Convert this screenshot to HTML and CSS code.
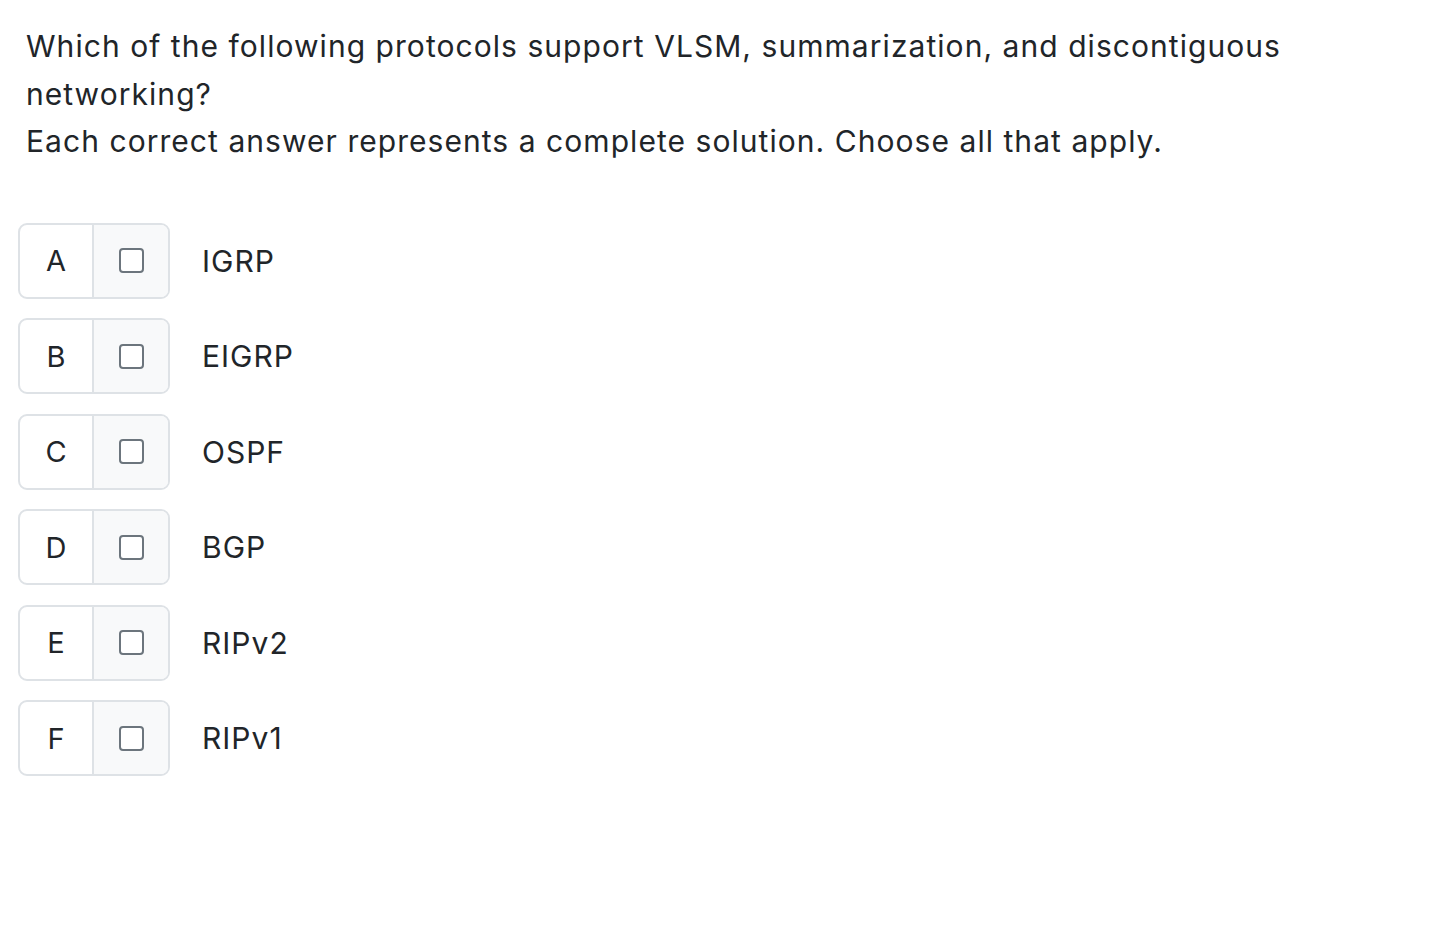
FILE: index.html
```html
<!DOCTYPE html>
<html lang="en">
<head>
    <meta charset="UTF-8">
    <meta name="viewport" content="width=device-width, initial-scale=1.0">
    <title>Question</title>
    <link rel="stylesheet" href="styles.css">
</head>
<body>
    <div class="question">
        <p class="question-text">Which of the following protocols support VLSM, summarization, and discontiguous networking?</p>
        <p class="question-hint">Each correct answer represents a complete solution. Choose all that apply.</p>
    </div>

    <div class="options">
        <label class="option">
            <span class="option-box">
                <span class="option-letter">A</span>
                <span class="option-check"><input type="checkbox"></span>
            </span>
            <span class="option-label">IGRP</span>
        </label>
        <label class="option">
            <span class="option-box">
                <span class="option-letter">B</span>
                <span class="option-check"><input type="checkbox"></span>
            </span>
            <span class="option-label">EIGRP</span>
        </label>
        <label class="option">
            <span class="option-box">
                <span class="option-letter">C</span>
                <span class="option-check"><input type="checkbox"></span>
            </span>
            <span class="option-label">OSPF</span>
        </label>
        <label class="option">
            <span class="option-box">
                <span class="option-letter">D</span>
                <span class="option-check"><input type="checkbox"></span>
            </span>
            <span class="option-label">BGP</span>
        </label>
        <label class="option">
            <span class="option-box">
                <span class="option-letter">E</span>
                <span class="option-check"><input type="checkbox"></span>
            </span>
            <span class="option-label">RIPv2</span>
        </label>
        <label class="option">
            <span class="option-box">
                <span class="option-letter">F</span>
                <span class="option-check"><input type="checkbox"></span>
            </span>
            <span class="option-label">RIPv1</span>
        </label>
    </div>
</body>
</html>
```

FILE: styles.css
```css
* {
    margin: 0;
    padding: 0;
    box-sizing: border-box;
}

body {
    font-family: 'Inter', 'Liberation Sans', sans-serif;
    color: #212529;
    background: #fff;
    padding: 23px 18px;
}

.question {
    padding-left: 8px;
    font-size: 30px;
    line-height: 47.5px;
    letter-spacing: 1.05px;
    max-width: 1300px;
}

.options {
    display: flex;
    flex-direction: column;
    gap: 19.5px;
    margin-top: 57px;
}

.option {
    display: flex;
    align-items: center;
    cursor: pointer;
}

.option-box {
    display: flex;
    width: 152px;
    height: 76px;
    border: 2px solid #dee2e6;
    border-radius: 9px;
    overflow: hidden;
}

.option-letter {
    width: 74px;
    display: flex;
    justify-content: center;
    align-items: center;
    font-size: 29px;
    border-right: 2px solid #dee2e6;
}

.option-check {
    flex: 1;
    display: flex;
    justify-content: center;
    align-items: center;
    background: #f8f9fa;
}

.option-check input {
    appearance: none;
    width: 25px;
    height: 25px;
    border: 2px solid #6c757d;
    border-radius: 4px;
    background: #fff;
    cursor: pointer;
}

.option-label {
    margin-left: 32px;
    font-size: 30px;
    letter-spacing: 1px;
}
```
